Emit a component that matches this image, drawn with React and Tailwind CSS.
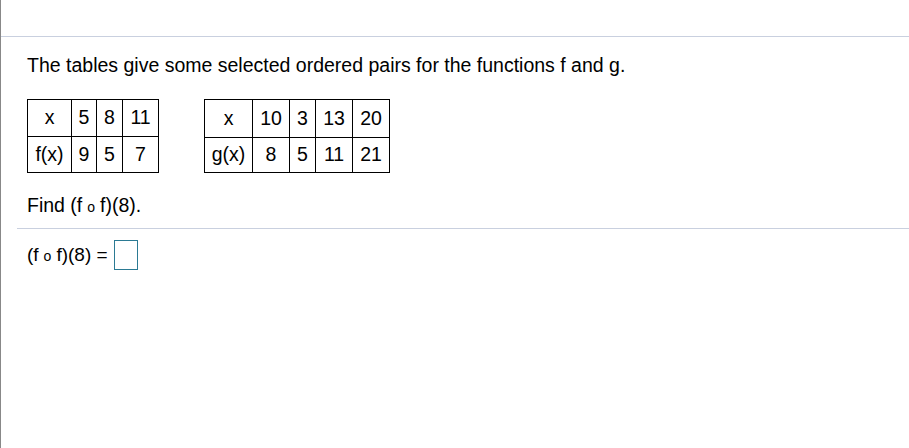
const fRows = [
  ["x", "5", "8", "11"],
  ["f(x)", "9", "5", "7"],
];

const gRows = [
  ["x", "10", "3", "13", "20"],
  ["g(x)", "8", "5", "11", "21"],
];

function ValueTable({ rows, cols, rowsTemplate }) {
  return (
    <div className={`grid gap-px bg-black p-px ${cols} ${rowsTemplate}`}>
      {rows.flat().map((cell, i) => (
        <div key={i} className="flex items-center justify-center bg-white">
          {cell}
        </div>
      ))}
    </div>
  );
}

// composition ring, drawn as a small o on the baseline
const Ring = () => <span className="px-[5px] text-[14px] leading-none">o</span>;

export default function App() {
  return (
    <div
      className="h-[448px] w-[909px] overflow-hidden border-l-[1.5px] border-[#888888] bg-white text-black"
      style={{ fontFamily: '"Liberation Sans", Arial, sans-serif' }}
    >
      <div className="h-[36px]" />
      <div className="h-px bg-[#c9d0df]" />

      <div className="pl-[26px] pt-[16px] text-[19.5px] leading-[24px]">
        The tables give some selected ordered pairs for the functions f and g.
      </div>

      <div className="mt-[22px] flex gap-[45px] pl-[26px] text-[19.5px]">
        <ValueTable
          rows={fRows}
          cols="grid-cols-[43px_24px_25px_35px]"
          rowsTemplate="grid-rows-[36px_35px]"
        />
        <ValueTable
          rows={gRows}
          cols="grid-cols-[47px_36px_25px_36px_36px]"
          rowsTemplate="grid-rows-[37px_34px]"
        />
      </div>

      <div className="mt-[20px] h-[24px] pl-[26px] text-[19.5px] leading-[24px]">
        Find (f<Ring />f)(8).
      </div>

      <div className="mt-[11px] ml-[16px] h-px bg-[#c9d0df]" />

      <div className="mt-[11px] flex items-center gap-[6px] pl-[26px] text-[19px]">
        <span>
          (f<Ring />f)(8) =
        </span>
        <span className="h-[30px] w-[24px] border border-[#2b7a93] bg-white" />
      </div>
    </div>
  );
}
